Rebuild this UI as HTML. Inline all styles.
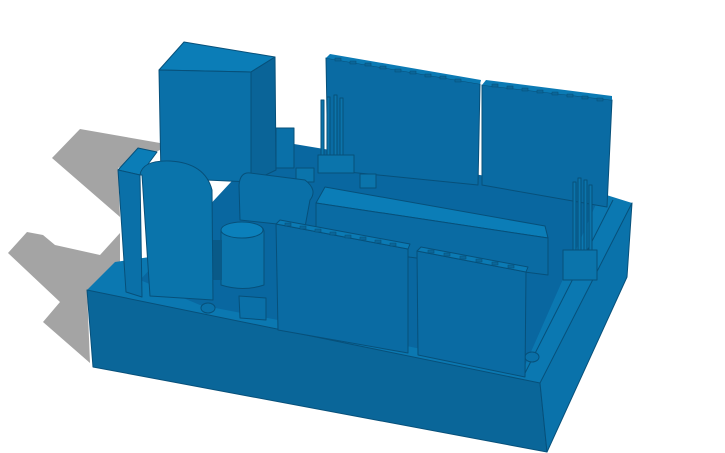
<!DOCTYPE html>
<html><head><meta charset="utf-8"><style>
html,body{margin:0;padding:0;background:#fff;width:725px;height:453px;overflow:hidden}
svg{display:block}
</style></head><body>
<svg width="725" height="453" viewBox="0 0 725 453" xmlns="http://www.w3.org/2000/svg" stroke-linejoin="round">
<!-- shadows -->
<polygon points="80,129 160,143 160,150 118,168 120,217 52,158" fill="#a4a4a4"/>
<polygon points="27,232 43,235 55,245 100,255 120,233 120,262 87,290 90,363 43,322 60,302 8,253" fill="#a4a4a4"/>
<!-- base -->
<polygon points="87,290 115,262 600,193 632,203 540,383" fill="#0b78b1"/>
<polygon points="87,290 540,383 547,452 93,367" fill="#0a6699" stroke="#07507a" stroke-width="1"/>
<polygon points="540,383 632,203 627,277 547,452" fill="#0a72aa" stroke="#07507a" stroke-width="1"/>
<line x1="523" y1="377" x2="613" y2="200" stroke="#07507a" stroke-width="1"/>
<!-- board inner darker area -->
<polygon points="140,280 270,140 600,195 523,370 450,355 330,330 200,305" fill="#0967a0"/>
<!-- right header back -->
<polygon points="482,85 612,100 607,207 482,185" fill="#0a6ba3" stroke="#07507a" stroke-width="1"/>
<polygon points="482,85 486,80 612,96 612,100" fill="#0b7ab4"/>
<!-- left header back -->
<polygon points="326,58 480,84 478,185 328,170" fill="#0a6ba3" stroke="#07507a" stroke-width="1"/>
<polygon points="326,58 330,54 481,80 480,84" fill="#0b7ab4"/>
<!-- pin headers -->
<g fill="#0b74ab" stroke="#07507a" stroke-width="1">
<rect x="321" y="100" width="3" height="60"/><rect x="327" y="97" width="3" height="63"/><rect x="334" y="95" width="3" height="65"/><rect x="340" y="98" width="3" height="62"/>
<rect x="318" y="155" width="36" height="18"/>
<rect x="573" y="182" width="3" height="75"/><rect x="578" y="178" width="3" height="78"/><rect x="584" y="180" width="3" height="76"/><rect x="589" y="185" width="3" height="70"/>
<rect x="563" y="250" width="34" height="30"/>
</g>
<!-- relay -->
<polygon points="159,70 184,42 275,57 251,72" fill="#0b7db7" stroke="#07507a" stroke-width="1"/>
<polygon points="251,72 275,57 276,170 251,182" fill="#0a6498" stroke="#07507a" stroke-width="1"/>
<polygon points="159,70 251,72 251,182 161,178" fill="#0a70a8" stroke="#07507a" stroke-width="1"/>
<!-- small parts near relay -->
<rect x="276" y="128" width="18" height="40" fill="#0a70a8" stroke="#07507a"/>
<rect x="296" y="168" width="18" height="14" fill="#0b74ab" stroke="#07507a"/>
<rect x="360" y="174" width="16" height="14" fill="#0b74ab" stroke="#07507a"/>
<!-- crystal oval -->
<path d="M250,173 L305,180 Q318,190 310,200 L305,227 L240,220 L239,185 Q240,172 250,173 Z" fill="#0a70a8" stroke="#07507a"/>
<!-- IC -->
<polygon points="316,203 325,187 545,226 548,238" fill="#0b7db7" stroke="#07507a"/>
<polygon points="316,203 548,238 548,275 316,245" fill="#0a6ba3" stroke="#07507a"/>
<!-- capacitor -->
<path d="M221,232 Q221,223 242,223 Q264,223 264,232 L264,285 Q243,292 221,285 Z" fill="#0b74ab" stroke="#07507a"/>
<ellipse cx="242" cy="230" rx="21" ry="8" fill="#0b80bb" stroke="#07507a"/>
<path d="M210,240 L222,240 L222,280 L212,280 Z" fill="#095a88"/>
<!-- terminal block -->
<polygon points="118,170 138,148 157,152 140,175" fill="#0b7db7" stroke="#07507a"/>
<polygon points="118,170 140,175 142,297 126,292" fill="#0a70a8" stroke="#07507a"/>
<path d="M140,175 Q142,160 170,161 Q205,163 212,190 L213,300 L150,296 L142,175 Z" fill="#0a74ab" stroke="#07507a"/>
<!-- small box -->
<polygon points="239,296 266,298 266,320 240,318" fill="#0a70a8" stroke="#07507a"/>
<!-- holes -->
<ellipse cx="208" cy="308" rx="7" ry="5" fill="#0a70a8" stroke="#07507a"/>
<ellipse cx="532" cy="357" rx="7" ry="5" fill="#0a70a8" stroke="#07507a"/>
<!-- front headers -->
<polygon points="276,224 408,249 408,353 278,330" fill="#0a6ba3" stroke="#07507a"/>
<polygon points="276,224 280,220 410,244 408,249" fill="#0b7ab4" stroke="#07507a"/>
<polygon points="417,251 526,272 525,377 418,355" fill="#0a6ba3" stroke="#07507a"/>
<polygon points="417,251 421,247 528,267 526,272" fill="#0b7ab4" stroke="#07507a"/>
<!-- socket holes -->
<g fill="#0a6699" stroke="#07507a" stroke-width="0.6">
<rect x="285" y="223" width="6" height="3"/><rect x="300" y="226" width="6" height="3"/><rect x="315" y="229" width="6" height="3"/><rect x="330" y="232" width="6" height="3"/><rect x="345" y="235" width="6" height="3"/><rect x="360" y="237" width="6" height="3"/><rect x="375" y="240" width="6" height="3"/><rect x="390" y="243" width="6" height="3"/>
<rect x="428" y="250" width="6" height="3"/><rect x="444" y="253" width="6" height="3"/><rect x="460" y="256" width="6" height="3"/><rect x="476" y="259" width="6" height="3"/><rect x="492" y="262" width="6" height="3"/><rect x="508" y="265" width="6" height="3"/>
<rect x="335" y="58" width="6" height="3"/><rect x="350" y="61" width="6" height="3"/><rect x="365" y="63" width="6" height="3"/><rect x="380" y="66" width="6" height="3"/><rect x="395" y="69" width="6" height="3"/><rect x="410" y="71" width="6" height="3"/><rect x="425" y="74" width="6" height="3"/><rect x="440" y="76" width="6" height="3"/><rect x="455" y="79" width="6" height="3"/>
<rect x="492" y="84" width="6" height="3"/><rect x="507" y="86" width="6" height="3"/><rect x="522" y="88" width="6" height="3"/><rect x="537" y="90" width="6" height="3"/><rect x="552" y="92" width="6" height="3"/><rect x="567" y="94" width="6" height="3"/><rect x="582" y="96" width="6" height="3"/><rect x="597" y="98" width="6" height="3"/>
</g>
</svg>
</body></html>
